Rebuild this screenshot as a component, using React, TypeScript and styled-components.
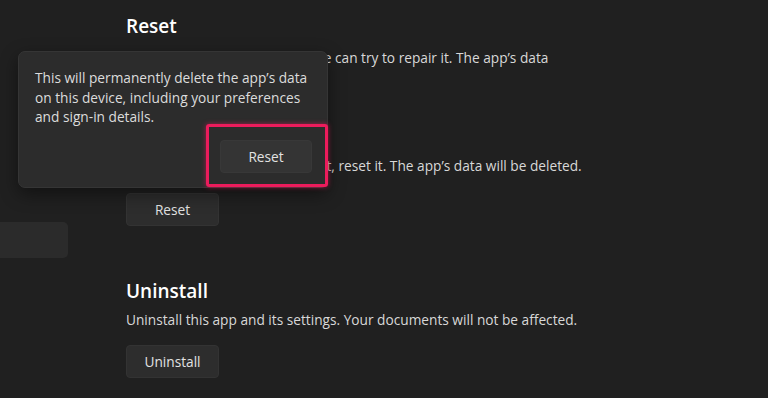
import styled, { createGlobalStyle } from 'styled-components';

const GlobalStyle = createGlobalStyle`
  html, body {
    margin: 0;
    padding: 0;
    background: #202020;
  }
  body {
    font-family: 'Open Sans', 'Noto Sans', sans-serif;
    color: #d6d6d6;
    overflow: hidden;
  }
`;

const Page = styled.div`
  position: relative;
  display: flex;
  width: 768px;
  height: 398px;
  background: #202020;
  overflow: hidden;
`;

const Sidebar = styled.nav`
  width: 68px;
  flex-shrink: 0;
  padding-top: 222px;
`;

const NavItem = styled.div`
  height: 36px;
  background: #2b2b2b;
  border-radius: 0 5px 5px 0;
`;

const Content = styled.main`
  flex: 1;
  padding-left: 58px;
  padding-top: 13px;
`;

const Section = styled.section<{ gap?: number }>`
  margin-top: ${(props) => props.gap ?? 0}px;
`;

const Heading = styled.h2`
  margin: 0;
  font-size: 19px;
  font-weight: 600;
  line-height: 26px;
  color: #ffffff;
`;

const Text = styled.p<{ top?: number }>`
  margin: ${(props) => props.top ?? 0}px 0 0 0;
  font-size: 13.7px;
  line-height: 20px;
  color: #d8d8d8;
`;

const Button = styled.button<{ top?: number }>`
  display: flex;
  align-items: center;
  justify-content: center;
  width: 93px;
  height: 33px;
  margin-top: ${(props) => props.top ?? 0}px;
  padding: 0;
  font-family: inherit;
  font-size: 13.7px;
  color: #e2e2e2;
  background: #2d2d2d;
  border: 1px solid #333333;
  border-radius: 4px;
`;

const Flyout = styled.div`
  position: absolute;
  left: 18px;
  top: 51px;
  width: 310px;
  height: 137px;
  box-sizing: border-box;
  padding: 16px 14px 0 16px;
  background: #2c2c2c;
  border: 1px solid #353535;
  border-radius: 7px;
  box-shadow: 0 6px 18px rgba(0, 0, 0, 0.45);
  display: flex;
  flex-direction: column;
`;

const FlyoutText = styled.p`
  margin: 0;
  font-size: 13.7px;
  line-height: 19.5px;
  color: #dcdcdc;
`;

const FlyoutActions = styled.div`
  display: flex;
  justify-content: flex-end;
  margin-top: 13px;
  margin-right: 1px;
`;

const Highlight = styled.div`
  position: absolute;
  left: 206px;
  top: 124px;
  width: 122px;
  height: 63px;
  box-sizing: border-box;
  border: 3.5px solid #ec1c5c;
  border-radius: 3px;
  box-shadow: 0 0 5px rgba(236, 28, 92, 0.6);
  pointer-events: none;
`;

const FlyoutButton = styled(Button)`
  width: 92px;
  height: 33px;
  background: #343434;
  border-color: #383838;
`;

export default function App() {
  return (
    <>
      <GlobalStyle />
      <Page>
        <Sidebar>
          <NavItem />
        </Sidebar>
        <Content>
          <Section>
            <Heading>Reset</Heading>
            <Text top={9}>
              If this app isn’t working right, we can try to repair it. The app’s data
              <br />
              won’t be affected.
            </Text>
            <Button top={14}>Repair</Button>
            <Text top={21}>
              If this app still isn’t working right, reset it. The app’s data will be deleted.
            </Text>
            <Button top={17}>Reset</Button>
          </Section>
          <Section gap={52}>
            <Heading>Uninstall</Heading>
            <Text top={6}>
              Uninstall this app and its settings. Your documents will not be affected.
            </Text>
            <Button top={15}>Uninstall</Button>
          </Section>
        </Content>
        <Flyout>
          <FlyoutText>
            This will permanently delete the app’s data on this device, including your
            preferences and sign-in details.
          </FlyoutText>
          <FlyoutActions>
            <FlyoutButton>Reset</FlyoutButton>
          </FlyoutActions>
        </Flyout>
        <Highlight />
      </Page>
    </>
  );
}
